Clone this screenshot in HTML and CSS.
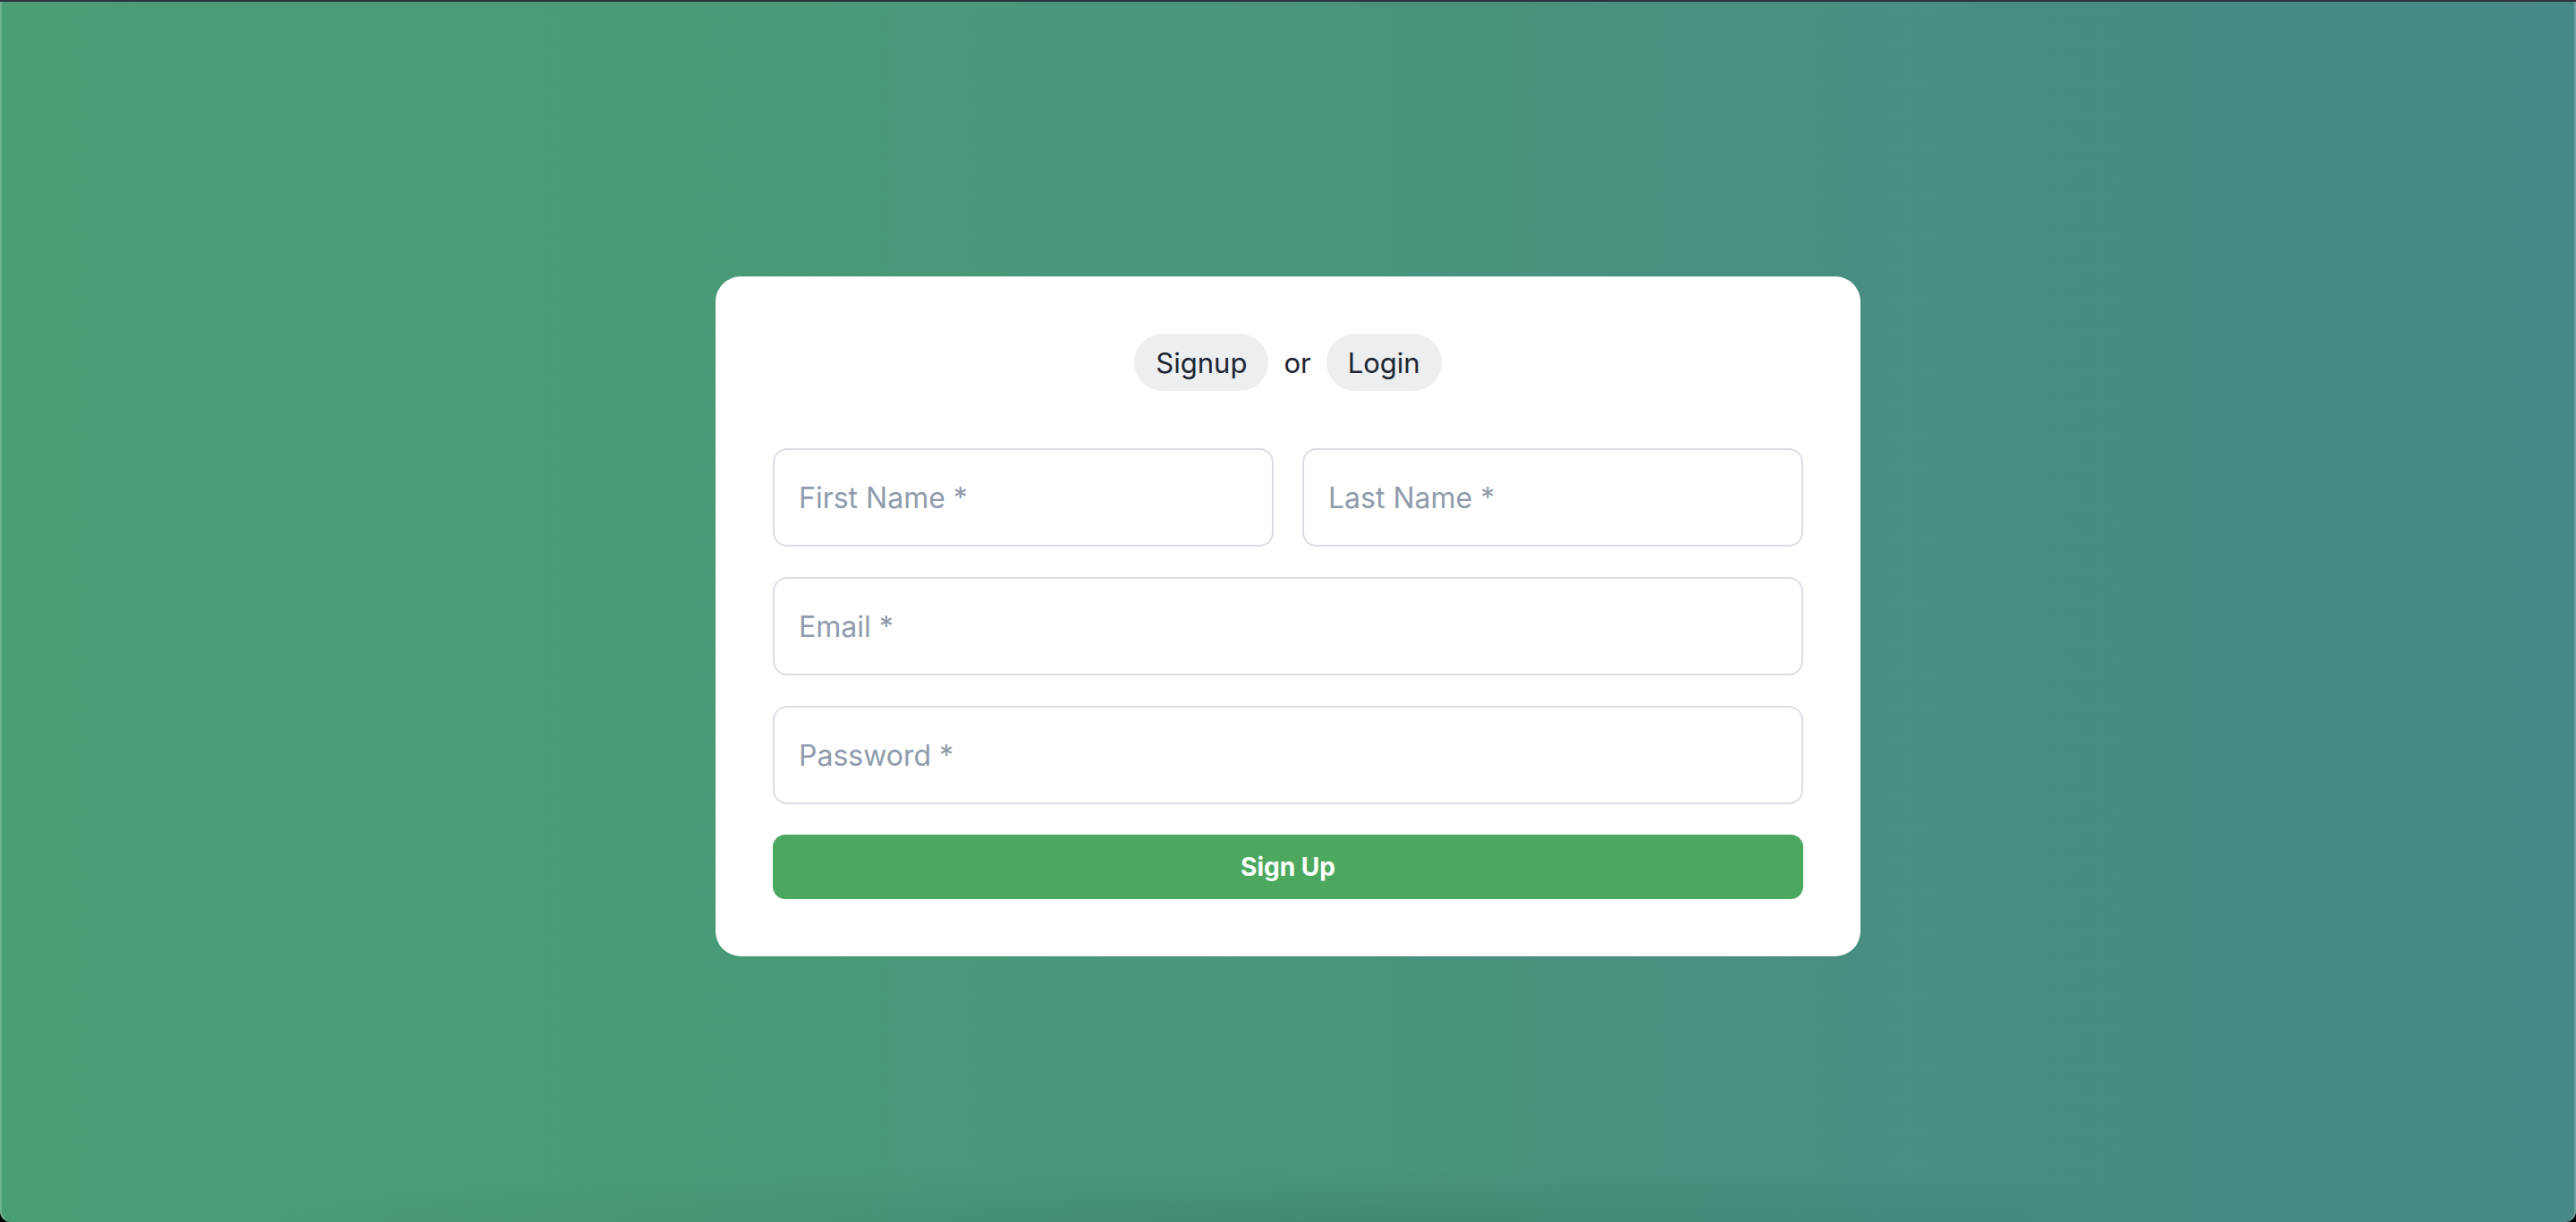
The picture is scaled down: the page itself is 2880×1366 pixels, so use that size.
FILE: index.html
```html
<!DOCTYPE html>
<html lang="en">
<head>
<meta charset="utf-8">
<title>Signup</title>
<link rel="stylesheet" href="styles.css">
</head>
<body>
<div class="window">
  <main class="stage">
    <form class="card">
      <div class="switcher">
        <button type="button" class="pill">Signup</button>
        <span class="or">or</span>
        <button type="button" class="pill">Login</button>
      </div>
      <div class="fields">
        <div class="row">
          <input class="field" type="text" placeholder="First Name *">
          <input class="field" type="text" placeholder="Last Name *">
        </div>
        <input class="field" type="email" placeholder="Email *">
        <input class="field" type="password" placeholder="Password *">
        <button type="button" class="submit">Sign Up</button>
      </div>
    </form>
  </main>
</div>
</body>
</html>
```

FILE: styles.css
```css
* { box-sizing: border-box; }

html, body {
  margin: 0;
  padding: 0;
  background: #000;
}

body {
  font-family: Inter, "Noto Sans", "Liberation Sans", sans-serif;
  width: 2880px;
  height: 1366px;
  overflow: hidden;
}

.window {
  height: 1366px;
  border-top: 2px solid #30303e;
  border-radius: 0 0 12px 12px;
  background:
    radial-gradient(ellipse 45% 60px at 50% 100%, rgba(20, 50, 40, 0.10), rgba(20, 50, 40, 0)),
    linear-gradient(to right, #4a9e74 0%, #489a78 30%, #488f80 70%, #478888 100%);
  box-shadow: inset 2px 0 0 rgba(255, 255, 255, 0.22), inset -2px 0 0 rgba(255, 255, 255, 0.22);
  overflow: hidden;
}

.stage {
  height: 100%;
  display: flex;
  align-items: center;
  justify-content: center;
  padding-top: 10px;
}

.card {
  width: 1280px;
  background: #ffffff;
  border-radius: 28px;
  padding: 64px;
  display: flex;
  flex-direction: column;
  gap: 64px;
}

.switcher {
  display: flex;
  justify-content: center;
  align-items: center;
  gap: 17px;
}

.pill {
  height: 64px;
  padding: 0 24px;
  border: none;
  border-radius: 32px;
  background: #edeef0;
  color: #1c2431;
  font-family: inherit;
  font-size: 31px;
  font-weight: 400;
  cursor: pointer;
}

.or {
  font-size: 31px;
  color: #1c2431;
}

.fields {
  display: flex;
  flex-direction: column;
  gap: 34px;
}

.row {
  display: grid;
  grid-template-columns: 1fr 1fr;
  gap: 32px;
}

.field {
  display: block;
  width: 100%;
  height: 110px;
  border: 2px solid #dadee4;
  border-radius: 16px;
  padding: 0 27px;
  font-family: inherit;
  font-size: 32px;
  color: #1c2431;
  background: #fff;
  outline: none;
}

.field::placeholder {
  color: #8f9bab;
}

.submit {
  height: 72px;
  border: none;
  border-radius: 14px;
  background: #4ca85f;
  color: #ffffff;
  font-family: inherit;
  font-size: 28px;
  font-weight: 700;
  cursor: pointer;
}
```
